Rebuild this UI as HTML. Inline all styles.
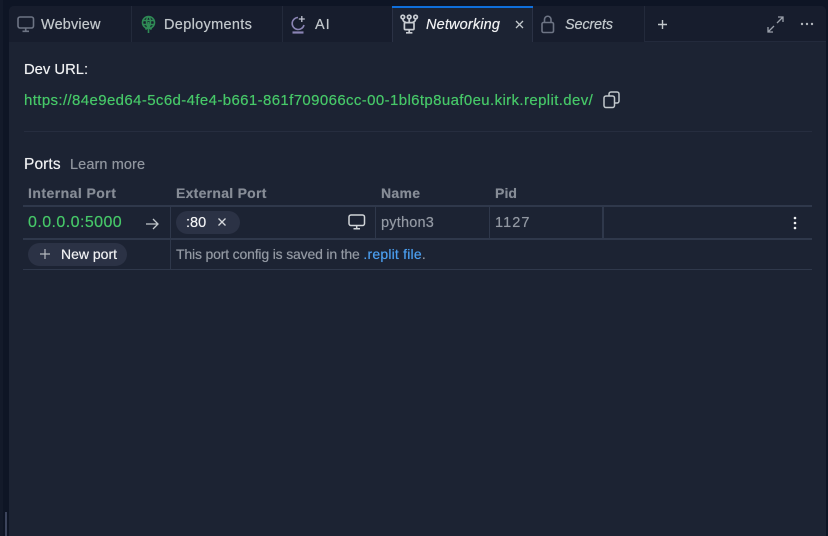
<!DOCTYPE html>
<html><head><meta charset="utf-8">
<style>
html,body{margin:0;padding:0;width:828px;height:536px;overflow:hidden;background:#0e1525}
body{font-family:"Liberation Sans",sans-serif}
#w{position:absolute;left:0;top:0;width:828px;height:536px;background:#0e1525;overflow:hidden;filter:blur(.3px)}
.a{position:absolute}
.t{position:absolute;white-space:nowrap;line-height:18px;text-shadow:0 0 .5px currentColor}
svg{position:absolute;overflow:visible}
</style></head><body><div id="w">
<div class="a" style="left:0;top:0;width:3px;height:536px;background:#131a2a"></div>
<div class="a" style="left:5px;top:512px;width:2px;height:24px;background:#3c445c"></div>
<div class="a" style="left:9px;top:6px;width:817px;height:530px;background:#1c2333;border-radius:5px 5px 0 0"></div>
<div class="a" style="left:9px;top:6px;width:817px;height:36px;background:#171d2d;border-radius:5px 5px 0 0"></div>
<div class="a" style="left:644px;top:41px;width:182px;height:1px;background:#232a3c"></div>
<div class="a" style="left:131px;top:6px;width:1px;height:36px;background:#232a3b"></div>
<div class="a" style="left:282px;top:6px;width:1px;height:36px;background:#232a3b"></div>
<div class="a" style="left:644px;top:6px;width:1px;height:36px;background:#232a3b"></div>
<div class="a" style="left:392px;top:6px;width:141px;height:36px;background:#1c2333;box-sizing:border-box;border-left:1px solid #2b3245;border-right:1px solid #2b3245"></div>
<div class="a" style="left:392px;top:6px;width:141px;height:2px;background:#0f6fdc"></div>

<svg style="left:17px;top:16px" width="18" height="18" viewBox="0 0 18 18" fill="none" stroke="#6d7484" stroke-width="1.6"><rect x="1" y="1" width="15.500" height="11" rx="2"/><path d="M8.700 12v3M5.500 15.300h6.500"/></svg>
<div class="t" style="left:41px;top:16px;font-size:14.5px;color:#c2c8cc;letter-spacing:.15px">Webview</div>

<svg style="left:140px;top:15px" width="18" height="20" viewBox="0 0 18 20" fill="none" stroke="#2f8a55" stroke-width="1.600"><circle cx="8.500" cy="7.500" r="6"/><path d="M3 5.500h11M3 9.500h11M8.500 1.500c-2.600 2-2.600 8 0 12 2.600-4 2.600-10 0-12M8.500 7v11M5.500 14.500l3-3 3 3"/></svg>
<div class="t" style="left:164px;top:16px;font-size:14.5px;color:#c2c8cc;letter-spacing:.33px">Deployments</div>

<svg style="left:291px;top:15px" width="16" height="20" viewBox="0 0 16 20" fill="none" stroke="#8a84b4" stroke-width="1.600"><path d="M7 2.500A6 6 0 1 0 13 10"/><path d="M1.500 17.500h11" stroke-width="2.200"/><path d="M10.800 1v6M7.800 4h6" stroke="#c0c3d0" stroke-width="1.300"/></svg>
<div class="t" style="left:315px;top:16px;font-size:14.5px;color:#c2c8cc;letter-spacing:1px">AI</div>

<svg style="left:400px;top:14px" width="19" height="21" viewBox="0 0 19 21" fill="none" stroke="#c8ccd2" stroke-width="1.700"><circle cx="2.800" cy="3" r="1.800"/><circle cx="9.200" cy="3" r="1.800"/><circle cx="15.600" cy="3" r="1.800"/><path d="M2.800 4.800c0 3 2 3.200 3 3.600M15.600 4.800c0 3-2 3.200-3 3.600M9.200 4.800v3.400"/><rect x="4.400" y="8.600" width="9.600" height="7" rx="1"/><path d="M9.200 15.600v3M6 18.800h6.400"/></svg>
<div class="t" style="left:426px;top:16px;font-size:14.5px;color:#f0f1f3;font-style:italic;letter-spacing:.15px">Networking</div>
<svg style="left:515px;top:20px" width="9" height="9" viewBox="0 0 9 9" stroke="#c2c8cc" stroke-width="1.300"><path d="M1 1l7 7M8 1l-7 7"/></svg>

<svg style="left:541px;top:15px" width="14" height="19" viewBox="0 0 14 19" fill="none" stroke="#6d7484" stroke-width="1.600"><rect x="1" y="7.500" width="11.500" height="10" rx="1.500"/><path d="M3.500 7.500V4.500a3.200 3.200 0 0 1 6.500 0v3"/></svg>
<div class="t" style="left:565px;top:16px;font-size:14.5px;color:#c2c8cc;font-style:italic;letter-spacing:-.2px">Secrets</div>

<svg style="left:658px;top:19.500px" width="9" height="9" viewBox="0 0 9 9" stroke="#c2c8cc" stroke-width="1.400"><path d="M4.500 0v9M0 4.500h9"/></svg>
<svg style="left:767px;top:16px" width="17" height="17" viewBox="0 0 17 17" fill="none" stroke="#9aa0aa" stroke-width="1.300"><path d="M10 7l6-6M11 1h5v5M7 10l-6 6M1 11v5h5"/></svg>
<svg style="left:800px;top:22px" width="14" height="4" viewBox="0 0 14 4" fill="#b0b5bb"><circle cx="2" cy="2" r="1.200"/><circle cx="7" cy="2" r="1.200"/><circle cx="12" cy="2" r="1.200"/></svg>

<div class="t" style="left:24px;top:61px;font-size:14.800px;color:#f0f1f3">Dev URL:</div>
<div class="t" style="left:24px;top:92px;font-size:15px;color:#46c768;letter-spacing:.38px">https://84e9ed64-5c6d-4fe4-b661-861f709066cc-00-1bl6tp8uaf0eu.kirk.replit.dev/</div>
<svg style="left:603px;top:91px" width="18" height="18" viewBox="0 0 18 18" fill="none" stroke="#c2c8cc" stroke-width="1.500"><rect x="1" y="5" width="10.500" height="11.500" rx="2"/><path d="M6 4.500V3a2 2 0 0 1 2-2h6a2 2 0 0 1 2 2v7a2 2 0 0 1-2 2h-2.500"/></svg>

<div class="a" style="left:24px;top:131px;width:788px;height:1px;background:#262d3f"></div>

<div class="t" style="left:24px;top:156px;font-size:15.500px;color:#f0f1f3;letter-spacing:.1px">Ports</div>
<div class="t" style="left:70px;top:156px;font-size:14.500px;color:#8f959e;letter-spacing:.1px">Learn more</div>

<div class="t" style="left:28px;top:184px;font-size:14px;font-weight:bold;color:#868c96;letter-spacing:.45px">Internal Port</div>
<div class="t" style="left:176px;top:184px;font-size:14px;font-weight:bold;color:#868c96;letter-spacing:.27px">External Port</div>
<div class="t" style="left:381px;top:184px;font-size:14px;font-weight:bold;color:#868c96;letter-spacing:.3px">Name</div>
<div class="t" style="left:495px;top:184px;font-size:14px;font-weight:bold;color:#868c96;letter-spacing:.1px">Pid</div>

<div class="a" style="left:23px;top:205px;width:789px;height:2px;background:#2f384b"></div>
<div class="a" style="left:23px;top:238px;width:789px;height:2px;background:#2f384b"></div>
<div class="a" style="left:23px;top:269px;width:789px;height:1px;background:#2f384b"></div>
<div class="a" style="left:170px;top:206px;width:1px;height:64px;background:#2f384b"></div>
<div class="a" style="left:375px;top:206px;width:1px;height:33px;background:#2f384b"></div>
<div class="a" style="left:489px;top:206px;width:1px;height:33px;background:#2f384b"></div>
<div class="a" style="left:602px;top:206px;width:2px;height:33px;background:#2f384b"></div>

<div class="t" style="left:28px;top:214px;font-size:16px;color:#46c768;letter-spacing:.43px">0.0.0.0:5000</div>
<svg style="left:146px;top:218px" width="13" height="12" viewBox="0 0 13 12" fill="none" stroke="#c2c8cc" stroke-width="1.300"><path d="M0 6h12M7 1l5 5-5 5"/></svg>

<div class="a" style="left:176px;top:211px;width:64px;height:23px;border-radius:12px;background:#2b3245"></div>
<div class="t" style="left:186px;top:214px;font-size:14.500px;color:#f0f1f3">:80</div>
<svg style="left:218px;top:218px" width="8" height="8" viewBox="0 0 8 8" stroke="#d5d8dc" stroke-width="1.300"><path d="M.5.500l7 7M7.500.500l-7 7"/></svg>
<svg style="left:348px;top:214px" width="18" height="17" viewBox="0 0 18 17" fill="none" stroke="#d0d4d8" stroke-width="1.500"><rect x="1" y="1" width="15.500" height="10.500" rx="2"/><path d="M8.700 11.500v3M5.500 14.700h6.500"/></svg>

<div class="t" style="left:381px;top:214px;font-size:14.500px;color:#9298a2;letter-spacing:.2px">python3</div>
<div class="t" style="left:495px;top:214px;font-size:14.500px;color:#9298a2;letter-spacing:1.100px">1127</div>
<svg style="left:793px;top:216px" width="4" height="14" viewBox="0 0 4 14" fill="#f0f1f3"><circle cx="2" cy="2" r="1.300"/><circle cx="2" cy="7" r="1.300"/><circle cx="2" cy="12" r="1.300"/></svg>

<div class="a" style="left:28px;top:243px;width:99px;height:23px;border-radius:12px;background:#2b3245"></div>
<svg style="left:40px;top:249px" width="10" height="10" viewBox="0 0 10 10" stroke="#b4b8be" stroke-width="1.200"><path d="M5 0v10M0 5h10"/></svg>
<div class="t" style="left:61px;top:245px;font-size:14px;color:#f0f1f3">New port</div>

<div class="t" style="left:176px;top:245px;font-size:14px;color:#9298a2;letter-spacing:-.17px">This port config is saved in the <span style="color:#4b9ff0;letter-spacing:.2px">.replit file</span>.</div>
</div></body></html>
